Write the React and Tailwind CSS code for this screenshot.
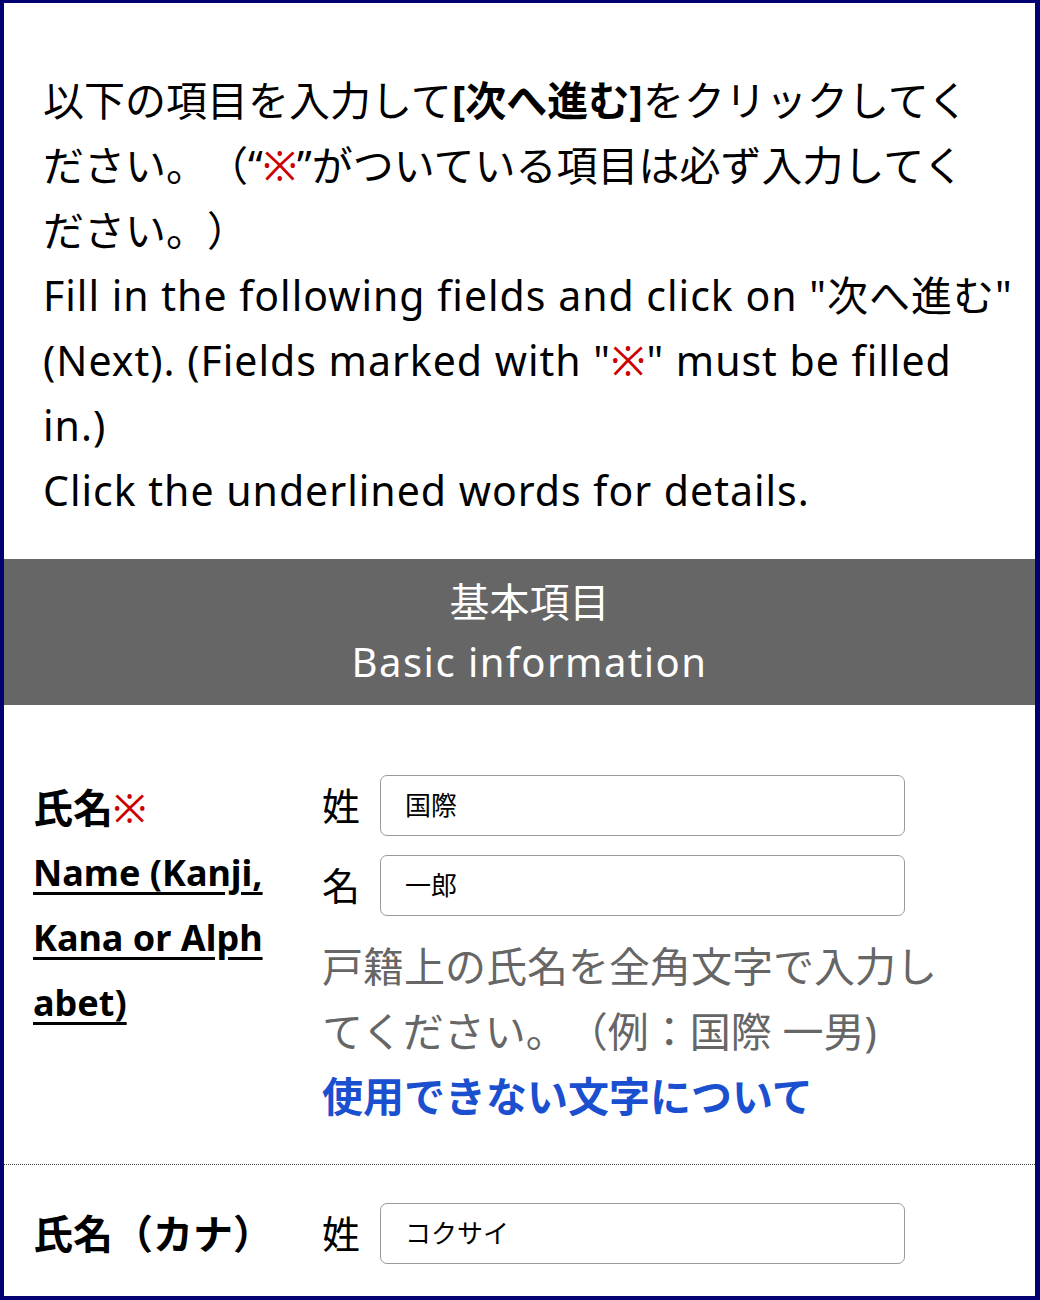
import React from "react";

const font = { fontFamily: '"Noto Sans", "Noto Sans CJK JP", sans-serif' };

function Field({ label, value }) {
  return (
    <div className="flex items-center">
      <span className="w-[58px] shrink-0 text-[38px] leading-[61px]">{label}</span>
      <div className="flex h-[61px] w-[525px] items-center rounded-[7px] border-[1.5px] border-[#9a9a9a] bg-white pl-[24px] text-[26px]">
        {value}
      </div>
    </div>
  );
}

const Req = () => <span className="font-normal text-[#cc0000]">※</span>;

export default function App() {
  return (
    <div
      className="h-[1300px] w-[1040px] overflow-hidden border-t-[3px] border-l-[4px] border-r-[5px] border-b-[4px] border-[#000070] bg-white text-black [text-spacing-trim:space-all]"
      style={font}
    >
      <div className="whitespace-nowrap pl-[39px] pt-[65px] text-[41px] leading-[65px]">
        <p>
          以下の項目を入力して<b>[次へ進む]</b>をクリックしてく
          <br />
          ださい。（“<Req />”がついている項目は必ず入力してく
          <br />
          ださい。）
        </p>
        <p className="tracking-[1px]">
          Fill in the following fields and click on "次へ進む"
          <br />
          (Next). (Fields marked with "<Req />" must be filled
          <br />
          in.)
        </p>
        <p className="tracking-[1px]">Click the underlined words for details.</p>
      </div>

      <div className="mt-[36px] bg-[#666666] py-[13px] pl-[20px] text-center text-[40px] leading-[60px] text-white">
        <div>基本項目</div>
        <div className="tracking-[1.5px]">Basic information</div>
      </div>

      <div className="flex border-b border-dotted border-[#444] pb-[35px] pl-[29px] pt-[70px]">
        <div className="w-[289px] shrink-0">
          <div className="text-[40px] font-bold leading-[65px]">
            氏名<Req />
          </div>
          <div className="whitespace-nowrap text-[36px] font-bold leading-[65px] underline underline-offset-[6px]">
            Name (Kanji,
            <br />
            Kana or Alph
            <br />
            abet)
          </div>
        </div>
        <div className="w-[630px]">
          <div className="flex flex-col gap-[19px]">
            <Field label="姓" value="国際" />
            <Field label="名" value="一郎" />
          </div>
          <p className="mt-[18px] text-[41px] leading-[65px] text-[#666666]">
            戸籍上の氏名を全角文字で入力してください。（例：国際 一男)
          </p>
          <p className="text-[41px] font-bold leading-[65px] text-[#1a4fd0]">
            使用できない文字について
          </p>
        </div>
      </div>

      <div className="flex items-center pl-[29px] pt-[36px]">
        <div className="w-[289px] shrink-0 text-[40px] font-bold leading-[65px]">氏名（カナ）</div>
        <Field label="姓" value="コクサイ" />
      </div>
    </div>
  );
}
